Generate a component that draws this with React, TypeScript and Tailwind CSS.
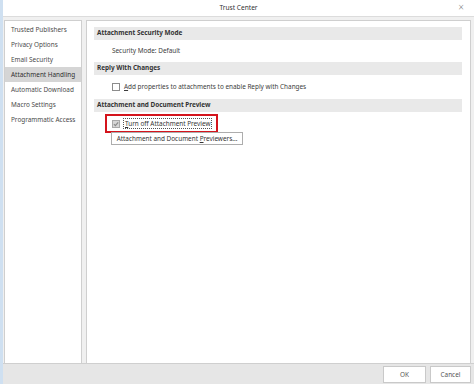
import React from 'react';

// ── Trust Center dialog (Outlook-style) ──

const NAV_ITEMS = [
  'Trusted Publishers',
  'Privacy Options',
  'Email Security',
  'Attachment Handling',
  'Automatic Download',
  'Macro Settings',
  'Programmatic Access',
];

function SectionHeader({ children }: { children: React.ReactNode }) {
  return (
    <div className="h-[13px] bg-[#e9e9e9] flex items-center pl-[3px] font-bold text-[#333] leading-none whitespace-nowrap">
      {children}
    </div>
  );
}

function CheckBox({ checked }: { checked?: boolean }) {
  return (
    <span
      className={`w-[8px] h-[8px] border flex items-center justify-center shrink-0 ${
        checked ? 'border-[#a9a9a9] bg-[#d6d6d6]' : 'border-[#8c8c8c] bg-white'
      }`}
    >
      {checked && (
        <svg width="6" height="6" viewBox="0 0 10 10" fill="none" stroke="#8a8a8a" strokeWidth="2">
          <path d="M1.5 5.2 L4 7.6 L8.6 2.2" />
        </svg>
      )}
    </span>
  );
}

export default function App() {
  return (
    <div
      className="w-[474px] h-[384px] bg-[#f0f0f0] border-l-[3px] border-l-[#cfe0f1] flex flex-col text-[6.4px] text-[#3c3c3c] overflow-hidden"
      style={{ fontFamily: '"Noto Sans", "Open Sans", sans-serif' }}
    >
      {/* Title bar */}
      <div className="relative h-[17px] bg-white border-b border-[#dcdcdc] flex items-center justify-center shrink-0">
        <span className="text-[6.6px] text-[#333]">Trust Center</span>
        <span className="absolute right-[10px] top-[2px] text-[10px] text-[#777] font-light leading-none">×</span>
      </div>

      {/* Body */}
      <div className="flex-1 flex gap-[4px] pt-[3px] pl-[1px] pr-[3px] min-h-0">
        {/* Left nav */}
        <div className="w-[78px] bg-white border border-[#cfcfcf] border-b-0 pt-[1px] flex flex-col">
          {NAV_ITEMS.map((item) => (
            <div
              key={item}
              className={`h-[15px] flex items-center pl-[6px] whitespace-nowrap ${
                item === 'Attachment Handling' ? 'bg-[#d5d5d5] text-[#2e2e2e]' : 'text-[#4a4a4a]'
              }`}
            >
              {item}
            </div>
          ))}
        </div>

        {/* Right panel */}
        <div className="flex-1 bg-white border border-[#cfcfcf] border-b-0 pt-[6px] pl-[7px] pr-[8px] flex flex-col whitespace-nowrap">
          <SectionHeader>Attachment Security Mode</SectionHeader>
          <div className="h-[22px] flex items-center pl-[18px]">Security Mode: Default</div>

          <SectionHeader>Reply With Changes</SectionHeader>
          <div className="h-[24px] flex items-center pl-[18px] gap-[4px]">
            <CheckBox />
            <span>
              <span className="underline">A</span>dd properties to attachments to enable Reply with Changes
            </span>
          </div>

          <SectionHeader>Attachment and Document Preview</SectionHeader>
          <div className="pl-[11px] pt-[2px]">
            <div className="w-[113px] h-[19px] border-[2px] border-[#d4141c] flex items-center pl-[5px] gap-[3px]">
              <CheckBox checked />
              <span className="border border-dotted border-[#555] px-[1px] leading-[9px] text-[#333]">
                <span className="underline">T</span>urn off Attachment Preview
              </span>
            </div>
            <div className="ml-[6px] mt-[-1px] w-[132px] h-[13px] border border-[#adadad] bg-white flex items-center justify-center text-[#333]">
              Attachment and Document&nbsp;<span className="underline">P</span>reviewers...
            </div>
          </div>
        </div>
      </div>

      {/* Footer */}
      <div className="h-[21px] shrink-0 border-t border-[#cfcfcf] bg-[#e6e6e6] flex justify-end items-start pt-[2px] pr-[3px] gap-[4px]">
        <button className="w-[43px] h-[17px] bg-white border border-[#c9c9c9] text-[#555]">OK</button>
        <button className="w-[41px] h-[17px] bg-white border border-[#c9c9c9] text-[#555]">Cancel</button>
      </div>
    </div>
  );
}
